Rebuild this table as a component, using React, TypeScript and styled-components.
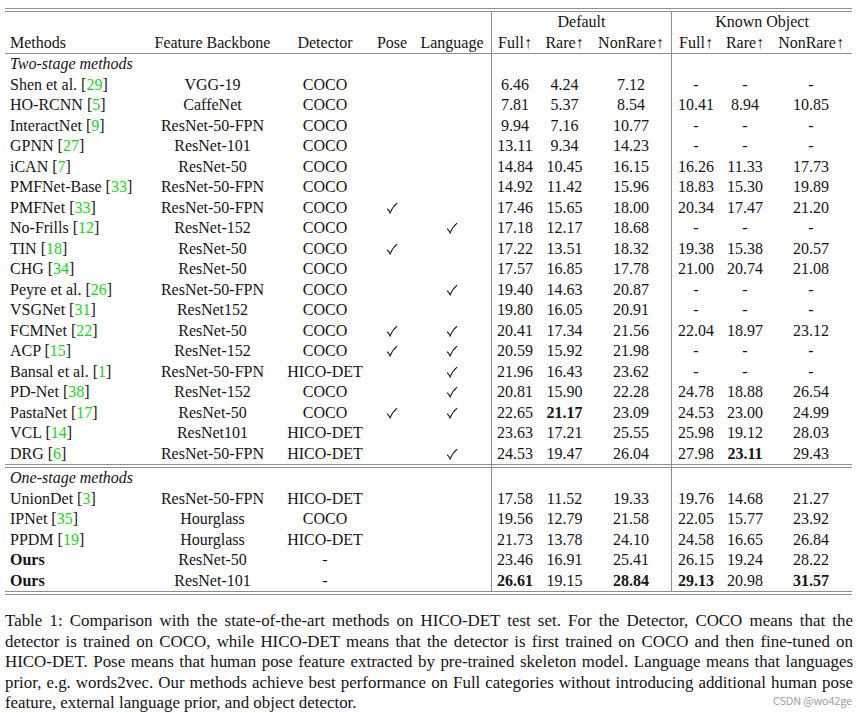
import styled, { createGlobalStyle } from 'styled-components';

const RULE = '#8e8e8e';
const CITE = '#14d814';

const GlobalStyle = createGlobalStyle`
  html, body {
    margin: 0;
    padding: 0;
    background: #fff;
  }
  body {
    font-family: 'Liberation Serif', 'Times New Roman', serif;
    color: #141414;
  }
`;

const Page = styled.div`
  position: relative;
  width: 865px;
  height: 713px;
  box-sizing: border-box;
  padding: 8px 12px 0 5px;
  overflow: hidden;
`;

const TableFrame = styled.div`
  width: 847px;
  border-top: 1px solid ${RULE};
  border-bottom: 1px solid ${RULE};
  padding: 2px 0;
`;

const Table = styled.table`
  width: 847px;
  table-layout: fixed;
  border-collapse: separate;
  border-spacing: 0;
  border-top: 1px solid ${RULE};
  border-bottom: 1px solid ${RULE};
  font-size: 16px;
  line-height: 20.5px;
`;

const Cell = styled.td<{
  $align?: 'left' | 'center';
  $divider?: boolean;
  $rule?: boolean;
  $bold?: boolean;
  $italic?: boolean;
}>`
  padding: 0;
  padding-left: ${(p) => (p.$align === 'left' ? '5px' : '0')};
  text-align: ${(p) => p.$align ?? 'center'};
  white-space: nowrap;
  vertical-align: middle;
  font-weight: ${(p) => (p.$bold ? 700 : 400)};
  font-style: ${(p) => (p.$italic ? 'italic' : 'normal')};
  border-left: ${(p) => (p.$divider ? `1px solid ${RULE}` : 'none')};
  border-bottom: ${(p) => (p.$rule ? `1px solid ${RULE}` : 'none')};
`;

const SpacerCell = styled.td<{ $divider?: boolean }>`
  height: 2px;
  padding: 0;
  font-size: 0;
  line-height: 0;
  border-top: 1px solid ${RULE};
  border-bottom: 1px solid ${RULE};
  border-left: ${(p) => (p.$divider ? `1px solid ${RULE}` : 'none')};
`;

const Cite = styled.span`
  color: ${CITE};
`;

const Check = styled.svg`
  width: 12px;
  height: 12px;
  vertical-align: -1px;
`;

const Caption = styled.div`
  margin-top: 16px;
  width: 848px;
  font-size: 16.9px;
  line-height: 20.5px;
  color: #141414;
`;

const CaptionLine = styled.div<{ $last?: boolean }>`
  text-align: ${(p) => (p.$last ? 'left' : 'justify')};
  text-align-last: ${(p) => (p.$last ? 'left' : 'justify')};
  white-space: nowrap;
`;

const Watermark = styled.span`
  position: absolute;
  right: 13px;
  top: 694px;
  font-family: 'Noto Sans CJK SC', 'DejaVu Sans', sans-serif;
  font-size: 11px;
  line-height: 13px;
  color: #a0a0a0;
  letter-spacing: -0.2px;
`;

const widths = [141, 133, 92, 42, 78, 47, 53, 80, 49, 50, 82];

type Val = string | { v: string; b: true };

interface Row {
  name: string;
  ref?: string;
  own?: boolean;
  backbone: string;
  detector: string;
  pose?: boolean;
  lang?: boolean;
  vals: Val[];
}

const twoStage: Row[] = [
  { name: 'Shen et al.', ref: '29', backbone: 'VGG-19', detector: 'COCO', vals: ['6.46', '4.24', '7.12', '-', '-', '-'] },
  { name: 'HO-RCNN', ref: '5', backbone: 'CaffeNet', detector: 'COCO', vals: ['7.81', '5.37', '8.54', '10.41', '8.94', '10.85'] },
  { name: 'InteractNet', ref: '9', backbone: 'ResNet-50-FPN', detector: 'COCO', vals: ['9.94', '7.16', '10.77', '-', '-', '-'] },
  { name: 'GPNN', ref: '27', backbone: 'ResNet-101', detector: 'COCO', vals: ['13.11', '9.34', '14.23', '-', '-', '-'] },
  { name: 'iCAN', ref: '7', backbone: 'ResNet-50', detector: 'COCO', vals: ['14.84', '10.45', '16.15', '16.26', '11.33', '17.73'] },
  { name: 'PMFNet-Base', ref: '33', backbone: 'ResNet-50-FPN', detector: 'COCO', vals: ['14.92', '11.42', '15.96', '18.83', '15.30', '19.89'] },
  { name: 'PMFNet', ref: '33', backbone: 'ResNet-50-FPN', detector: 'COCO', pose: true, vals: ['17.46', '15.65', '18.00', '20.34', '17.47', '21.20'] },
  { name: 'No-Frills', ref: '12', backbone: 'ResNet-152', detector: 'COCO', lang: true, vals: ['17.18', '12.17', '18.68', '-', '-', '-'] },
  { name: 'TIN', ref: '18', backbone: 'ResNet-50', detector: 'COCO', pose: true, vals: ['17.22', '13.51', '18.32', '19.38', '15.38', '20.57'] },
  { name: 'CHG', ref: '34', backbone: 'ResNet-50', detector: 'COCO', vals: ['17.57', '16.85', '17.78', '21.00', '20.74', '21.08'] },
  { name: 'Peyre et al.', ref: '26', backbone: 'ResNet-50-FPN', detector: 'COCO', lang: true, vals: ['19.40', '14.63', '20.87', '-', '-', '-'] },
  { name: 'VSGNet', ref: '31', backbone: 'ResNet152', detector: 'COCO', vals: ['19.80', '16.05', '20.91', '-', '-', '-'] },
  { name: 'FCMNet', ref: '22', backbone: 'ResNet-50', detector: 'COCO', pose: true, lang: true, vals: ['20.41', '17.34', '21.56', '22.04', '18.97', '23.12'] },
  { name: 'ACP', ref: '15', backbone: 'ResNet-152', detector: 'COCO', pose: true, lang: true, vals: ['20.59', '15.92', '21.98', '-', '-', '-'] },
  { name: 'Bansal et al.', ref: '1', backbone: 'ResNet-50-FPN', detector: 'HICO-DET', lang: true, vals: ['21.96', '16.43', '23.62', '-', '-', '-'] },
  { name: 'PD-Net', ref: '38', backbone: 'ResNet-152', detector: 'COCO', lang: true, vals: ['20.81', '15.90', '22.28', '24.78', '18.88', '26.54'] },
  { name: 'PastaNet', ref: '17', backbone: 'ResNet-50', detector: 'COCO', pose: true, lang: true, vals: ['22.65', { v: '21.17', b: true }, '23.09', '24.53', '23.00', '24.99'] },
  { name: 'VCL', ref: '14', backbone: 'ResNet101', detector: 'HICO-DET', vals: ['23.63', '17.21', '25.55', '25.98', '19.12', '28.03'] },
  { name: 'DRG', ref: '6', backbone: 'ResNet-50-FPN', detector: 'HICO-DET', lang: true, vals: ['24.53', '19.47', '26.04', '27.98', { v: '23.11', b: true }, '29.43'] },
];

const oneStage: Row[] = [
  { name: 'UnionDet', ref: '3', backbone: 'ResNet-50-FPN', detector: 'HICO-DET', vals: ['17.58', '11.52', '19.33', '19.76', '14.68', '21.27'] },
  { name: 'IPNet', ref: '35', backbone: 'Hourglass', detector: 'COCO', vals: ['19.56', '12.79', '21.58', '22.05', '15.77', '23.92'] },
  { name: 'PPDM', ref: '19', backbone: 'Hourglass', detector: 'HICO-DET', vals: ['21.73', '13.78', '24.10', '24.58', '16.65', '26.84'] },
  { name: 'Ours', own: true, backbone: 'ResNet-50', detector: '-', vals: ['23.46', '16.91', '25.41', '26.15', '19.24', '28.22'] },
  {
    name: 'Ours',
    own: true,
    backbone: 'ResNet-101',
    detector: '-',
    vals: [{ v: '26.61', b: true }, '19.15', { v: '28.84', b: true }, { v: '29.13', b: true }, '20.98', { v: '31.57', b: true }],
  },
];

const CheckMark = () => (
  <Check viewBox="0 0 11 11">
    <path d="M1 6.2 C2.2 7 3 8.2 3.8 10 C5.2 6.3 7.4 3.2 10.2 1" fill="none" stroke="#1a1a1a" strokeWidth="1" />
  </Check>
);

const DataRow = ({ row }: { row: Row }) => (
  <tr>
    <Cell $align="left" $bold={row.own}>
      {row.name}
      {row.ref && (
        <>
          {' '}[<Cite>{row.ref}</Cite>]
        </>
      )}
    </Cell>
    <Cell>{row.backbone}</Cell>
    <Cell>{row.detector}</Cell>
    <Cell>{row.pose && <CheckMark />}</Cell>
    <Cell>{row.lang && <CheckMark />}</Cell>
    {row.vals.map((val, i) => {
      const text = typeof val === 'string' ? val : val.v;
      const bold = typeof val !== 'string';
      return (
        <Cell key={i} $divider={i === 0 || i === 3} $bold={bold}>
          {text}
        </Cell>
      );
    })}
  </tr>
);

const GroupRow = ({ label }: { label: string }) => (
  <tr>
    <Cell $align="left" $italic colSpan={5}>
      {label}
    </Cell>
    <Cell $divider colSpan={3} />
    <Cell $divider colSpan={3} />
  </tr>
);

const App = () => {
  const metrics = ['Full↑', 'Rare↑', 'NonRare↑', 'Full↑', 'Rare↑', 'NonRare↑'];

  return (
    <>
      <GlobalStyle />
      <Page>
        <TableFrame>
          <Table>
            <colgroup>
              {widths.map((w, i) => (
                <col key={i} style={{ width: w }} />
              ))}
            </colgroup>
            <thead>
              <tr>
                <Cell colSpan={5} />
                <Cell $divider colSpan={3}>
                  Default
                </Cell>
                <Cell $divider colSpan={3}>
                  Known Object
                </Cell>
              </tr>
              <tr>
                <Cell $align="left" $rule>
                  Methods
                </Cell>
                <Cell $rule>Feature Backbone</Cell>
                <Cell $rule>Detector</Cell>
                <Cell $rule>Pose</Cell>
                <Cell $rule>Language</Cell>
                {metrics.map((m, i) => (
                  <Cell key={i} $rule $divider={i === 0 || i === 3}>
                    {m}
                  </Cell>
                ))}
              </tr>
            </thead>
            <tbody>
              <GroupRow label="Two-stage methods" />
              {twoStage.map((row, i) => (
                <DataRow key={i} row={row} />
              ))}
              <tr>
                <SpacerCell colSpan={5} />
                <SpacerCell $divider colSpan={3} />
                <SpacerCell $divider colSpan={3} />
              </tr>
              <GroupRow label="One-stage methods" />
              {oneStage.map((row, i) => (
                <DataRow key={i} row={row} />
              ))}
            </tbody>
          </Table>
        </TableFrame>
        <Caption>
          <CaptionLine>
            Table 1: Comparison with the state-of-the-art methods on HICO-DET test set. For the Detector, COCO means that the
          </CaptionLine>
          <CaptionLine>
            detector is trained on COCO, while HICO-DET means that the detector is first trained on COCO and then fine-tuned on
          </CaptionLine>
          <CaptionLine>
            HICO-DET. Pose means that human pose feature extracted by pre-trained skeleton model. Language means that languages
          </CaptionLine>
          <CaptionLine>
            prior, e.g. words2vec. Our methods achieve best performance on Full categories without introducing additional human pose
          </CaptionLine>
          <CaptionLine $last>feature, external language prior, and object detector.</CaptionLine>
        </Caption>
        <Watermark>CSDN @wo42ge</Watermark>
      </Page>
    </>
  );
};

export default App;
